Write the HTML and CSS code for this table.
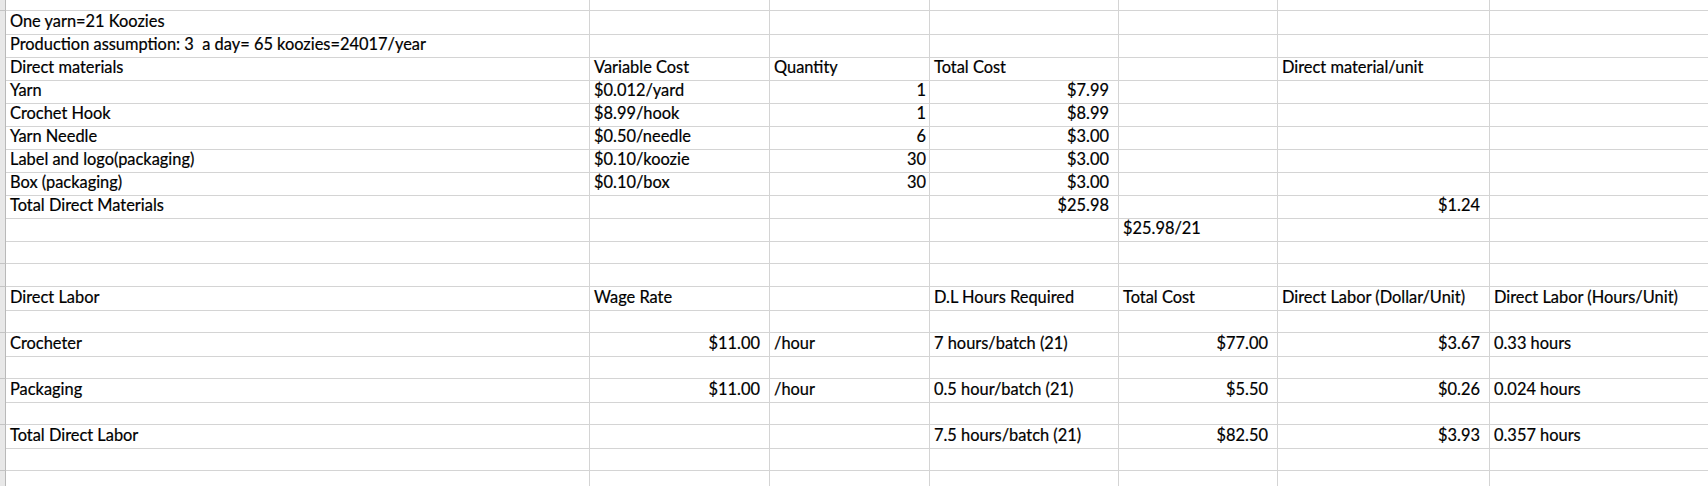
FILE: index.html
```html
<!DOCTYPE html>
<html>
<head>
<meta charset="utf-8">
<link rel="stylesheet" href="styles.css">
</head>
<body>
<div class="sheet">
  <div class="row top"><div class="hdr"></div><div class="c"></div><div class="c"></div><div class="c"></div><div class="c"></div><div class="c"></div><div class="c"></div><div class="c"></div></div>
  <div class="row"><div class="hdr"></div><div class="c">One yarn=21 Koozies</div><div class="c"></div><div class="c"></div><div class="c"></div><div class="c"></div><div class="c"></div><div class="c"></div></div>
  <div class="row"><div class="hdr"></div><div class="c">Production assumption: 3&nbsp; a day= 65 koozies=24017/year</div><div class="c"></div><div class="c"></div><div class="c"></div><div class="c"></div><div class="c"></div><div class="c"></div></div>
  <div class="row"><div class="hdr"></div><div class="c">Direct materials</div><div class="c">Variable Cost</div><div class="c">Quantity</div><div class="c">Total Cost</div><div class="c"></div><div class="c">Direct material/unit</div><div class="c"></div></div>
  <div class="row"><div class="hdr"></div><div class="c">Yarn</div><div class="c">$0.012/yard</div><div class="c num">1</div><div class="c cur">$7.99</div><div class="c"></div><div class="c"></div><div class="c"></div></div>
  <div class="row"><div class="hdr"></div><div class="c">Crochet Hook</div><div class="c">$8.99/hook</div><div class="c num">1</div><div class="c cur">$8.99</div><div class="c"></div><div class="c"></div><div class="c"></div></div>
  <div class="row"><div class="hdr"></div><div class="c">Yarn Needle</div><div class="c">$0.50/needle</div><div class="c num">6</div><div class="c cur">$3.00</div><div class="c"></div><div class="c"></div><div class="c"></div></div>
  <div class="row"><div class="hdr"></div><div class="c">Label and logo(packaging)</div><div class="c">$0.10/koozie</div><div class="c num">30</div><div class="c cur">$3.00</div><div class="c"></div><div class="c"></div><div class="c"></div></div>
  <div class="row"><div class="hdr"></div><div class="c">Box (packaging)</div><div class="c">$0.10/box</div><div class="c num">30</div><div class="c cur">$3.00</div><div class="c"></div><div class="c"></div><div class="c"></div></div>
  <div class="row"><div class="hdr"></div><div class="c">Total Direct Materials</div><div class="c"></div><div class="c"></div><div class="c cur">$25.98</div><div class="c"></div><div class="c cur">$1.24</div><div class="c"></div></div>
  <div class="row"><div class="hdr"></div><div class="c"></div><div class="c"></div><div class="c"></div><div class="c"></div><div class="c">$25.98/21</div><div class="c"></div><div class="c"></div></div>
  <div class="row"><div class="hdr"></div><div class="c"></div><div class="c"></div><div class="c"></div><div class="c"></div><div class="c"></div><div class="c"></div><div class="c"></div></div>
  <div class="row"><div class="hdr"></div><div class="c"></div><div class="c"></div><div class="c"></div><div class="c"></div><div class="c"></div><div class="c"></div><div class="c"></div></div>
  <div class="row"><div class="hdr"></div><div class="c">Direct Labor</div><div class="c">Wage Rate</div><div class="c"></div><div class="c">D.L Hours Required</div><div class="c">Total Cost</div><div class="c">Direct Labor (Dollar/Unit)</div><div class="c">Direct Labor (Hours/Unit)</div></div>
  <div class="row"><div class="hdr"></div><div class="c"></div><div class="c"></div><div class="c"></div><div class="c"></div><div class="c"></div><div class="c"></div><div class="c"></div></div>
  <div class="row"><div class="hdr"></div><div class="c">Crocheter</div><div class="c cur">$11.00</div><div class="c">/hour</div><div class="c">7 hours/batch (21)</div><div class="c cur">$77.00</div><div class="c cur">$3.67</div><div class="c">0.33 hours</div></div>
  <div class="row"><div class="hdr"></div><div class="c"></div><div class="c"></div><div class="c"></div><div class="c"></div><div class="c"></div><div class="c"></div><div class="c"></div></div>
  <div class="row"><div class="hdr"></div><div class="c">Packaging</div><div class="c cur">$11.00</div><div class="c">/hour</div><div class="c">0.5 hour/batch (21)</div><div class="c cur">$5.50</div><div class="c cur">$0.26</div><div class="c">0.024 hours</div></div>
  <div class="row"><div class="hdr"></div><div class="c"></div><div class="c"></div><div class="c"></div><div class="c"></div><div class="c"></div><div class="c"></div><div class="c"></div></div>
  <div class="row"><div class="hdr"></div><div class="c">Total Direct Labor</div><div class="c"></div><div class="c"></div><div class="c">7.5 hours/batch (21)</div><div class="c cur">$82.50</div><div class="c cur">$3.93</div><div class="c">0.357 hours</div></div>
  <div class="row"><div class="hdr"></div><div class="c"></div><div class="c"></div><div class="c"></div><div class="c"></div><div class="c"></div><div class="c"></div><div class="c"></div></div>
  <div class="row"><div class="hdr"></div><div class="c"></div><div class="c"></div><div class="c"></div><div class="c"></div><div class="c"></div><div class="c"></div><div class="c"></div></div>
</div>
</body>
</html>
```
FILE: styles.css
```css
html, body {
  margin: 0;
  padding: 0;
  background: #ffffff;
  overflow: hidden;
}
.sheet {
  width: 1708px;
  height: 486px;
  overflow: hidden;
  font-family: "Lato", "Liberation Sans", sans-serif;
  font-size: 16.4px;
  color: #000000;
  -webkit-text-stroke: 0.2px #000000;
}
.row {
  display: grid;
  grid-template-columns: 6px 584px 180px 160px 189px 159px 212px 1fr;
  height: 23px;
}
.row.top {
  height: 11px;
}
.hdr {
  background: #e8e8e8;
  border-right: 1px solid #b9b9b9;
  border-bottom: 1px solid #c4c4c4;
}
.c {
  box-sizing: border-box;
  border-right: 1px solid #d4d4d4;
  border-bottom: 1px solid #d4d4d4;
  display: flex;
  align-items: flex-end;
  padding: 0 3px 3px 4px;
  line-height: 20px;
  white-space: nowrap;
  min-width: 0;
}
.row > .c:last-child {
  border-right: none;
}
.num {
  justify-content: flex-end;
  padding-right: 3px;
}
.cur {
  justify-content: flex-end;
  padding-right: 9px;
}
```
